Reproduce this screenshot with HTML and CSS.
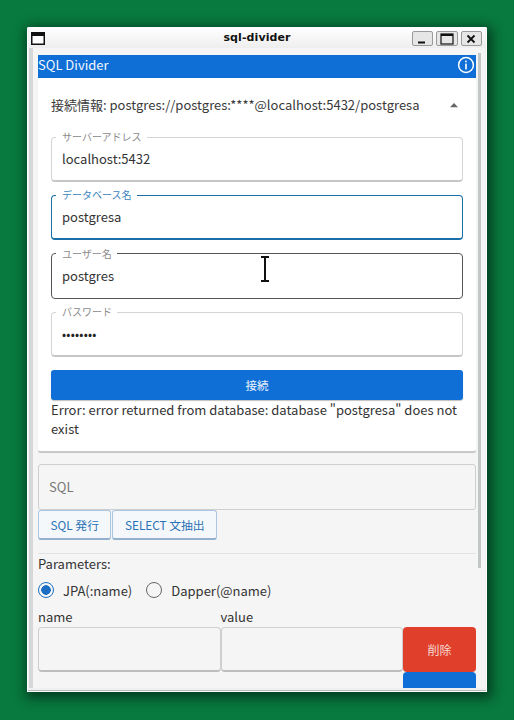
FILE: index.html
```html
<!DOCTYPE html>
<html lang="ja">
<head>
<meta charset="utf-8">
<title>sql-divider</title>
<link rel="stylesheet" href="styles.css">
</head>
<body>
<div class="window">
  <div class="titlebar">
    <svg class="win-menu" width="14" height="13" viewBox="0 0 14 13"><rect x="0.75" y="0.75" width="12.5" height="11.5" fill="#fff" stroke="#111" stroke-width="1.5"/><rect x="1" y="1" width="12" height="3" fill="#111"/></svg>
    <div class="win-title">sql-divider</div>
    <div class="win-controls">
      <div class="win-btn"><svg width="10" height="10" viewBox="0 0 10 10"><rect x="1" y="7.5" width="7" height="2" fill="#111"/></svg></div>
      <div class="win-btn"><svg width="14" height="12" viewBox="0 0 14 12"><rect x="1" y="1" width="12" height="10" fill="none" stroke="#111" stroke-width="1.2"/><rect x="1" y="1" width="12" height="2" fill="#111"/></svg></div>
      <div class="win-btn"><svg width="10" height="10" viewBox="0 0 10 10"><path d="M1.5 1.5L8.5 8.5M8.5 1.5L1.5 8.5" stroke="#111" stroke-width="1.8"/></svg></div>
    </div>
  </div>
  <div class="viewport">
    <div class="scrollbar"></div>
    <main class="page">
      <header class="appbar">
        <span>SQL Divider</span>
        <svg class="info" width="18" height="18" viewBox="0 0 18 18"><circle cx="9" cy="9" r="7.4" fill="none" stroke="#fff" stroke-width="1.5"/><rect x="8.2" y="7.6" width="1.6" height="5.8" fill="#fff"/><rect x="8.2" y="4.6" width="1.6" height="1.7" fill="#fff"/></svg>
      </header>
      <section class="card">
        <div class="acc-head">
          <span>接続情報: postgres://postgres:****@localhost:5432/postgresa</span>
          <svg class="caret" width="10" height="6" viewBox="0 0 10 6"><path d="M1 5.2L5 1L9 5.2Z" fill="#666"/></svg>
        </div>
        <div class="acc-body">
          <fieldset class="field">
            <legend>サーバーアドレス</legend>
            <div class="value">localhost:5432</div>
          </fieldset>
          <fieldset class="field focus">
            <legend>データベース名</legend>
            <div class="value">postgresa</div>
          </fieldset>
          <fieldset class="field hover">
            <legend>ユーザー名</legend>
            <div class="value">postgres</div>
          </fieldset>
          <fieldset class="field">
            <legend>パスワード</legend>
            <div class="value dots">••••••••</div>
          </fieldset>
          <button class="primary">接続</button>
          <p class="error">Error: error returned from database: database "postgresa" does not exist</p>
        </div>
      </section>
      <div class="sql-box">SQL</div>
      <div class="actions">
        <button class="outline">SQL 発行</button>
        <button class="outline">SELECT 文抽出</button>
      </div>
      <hr class="rule">
      <div class="param-label">Parameters:</div>
      <div class="radios">
        <label class="radio"><span class="dot on"></span>JPA(:name)</label>
        <label class="radio"><span class="dot"></span>Dapper(@name)</label>
      </div>
      <div class="param-grid">
        <div class="col-name">name</div>
        <div class="col-name">value</div>
        <div></div>
        <div class="box"></div>
        <div class="box"></div>
        <button class="danger">削除</button>
      </div>
      <div class="add-row"><button class="add"></button></div>
    </main>
  </div>
  <svg class="cursor" width="16" height="30" viewBox="0 0 16 30"><path d="M3 2h10M3 28h10M8 2v26" stroke="#fff" stroke-width="4.5" fill="none"/><path d="M4 3h8M4 27h8M8 3v24" stroke="#111" stroke-width="2" fill="none"/></svg>
</div>
</body>
</html>
```
FILE: styles.css
```css
* { box-sizing: border-box; }
html, body { margin: 0; height: 100%; }
body {
  width: 514px;
  height: 720px;
  overflow: hidden;
  background: #08793f;
  font-family: "Noto Sans CJK JP", "Noto Sans", sans-serif;
  color: #333;
  position: relative;
}
.window {
  position: absolute;
  left: 27px;
  top: 27px;
  width: 460px;
  height: 665px;
  background: #f0f0f0;
  border-radius: 2px 2px 0 0;
  box-shadow: 2px 3px 12px 3px rgba(0, 20, 10, 0.6), inset 0 0 0 1px #fff, inset -1px -2px 0 #b8bcbc;
  display: flex;
  flex-direction: column;
  padding: 0 2px 4px 2px;
}
.titlebar {
  height: 21px;
  flex: none;
  display: flex;
  align-items: center;
  padding: 0 3px 0 2px;
  background: linear-gradient(#fff, #eee);
  position: relative;
}
.win-menu { flex: none; margin-top: 2px; }
.win-title {
  position: absolute;
  left: 0;
  right: 0;
  top: 4px;
  text-align: center;
  font: bold 11px "DejaVu Sans", sans-serif;
  color: #111;
  letter-spacing: 0.1px;
}
.win-controls { margin-left: auto; display: flex; gap: 3px; margin-top: 2px; position: relative; }
.win-btn {
  width: 21.5px;
  height: 15px;
  background: #e6e6e6;
  border: 1px solid #9a9a9a;
  border-radius: 2px;
  display: flex;
  align-items: center;
  justify-content: center;
}
.viewport {
  flex: 1;
  min-height: 0;
  position: relative;
  overflow: hidden;
  background: #f5f5f5;
  border-left: 4px solid #d6d8d8;
  padding: 7px 9px 0 5px;
}
.scrollbar {
  position: absolute;
  right: 4px;
  top: 5px;
  width: 3px;
  height: 515px;
  background: #c3c7c7;
}
.page { display: flex; flex-direction: column; width: 438px; }
.appbar {
  height: 23px;
  background: #0f6fd6;
  color: #f2f7fd;
  font-size: 13px;
  line-height: 20px;
  display: flex;
  align-items: center;
  justify-content: space-between;
  padding-right: 1px;
  flex: none;
}
.appbar span { position: relative; top: -2px; }
.info { flex: none; position: relative; top: -2px; }
.card {
  background: #fff;
  border-bottom: 2px solid #c9c9c9;
  border-radius: 0 0 3px 3px;
  box-shadow: 0 0 1px rgba(0,0,0,.15);
  padding: 0 13px;
  height: 375px;
  flex: none;
}
.acc-head {
  height: 54px;
  display: flex;
  align-items: center;
  justify-content: space-between;
  font-size: 13px;
  color: #3a3a3a;
  padding-right: 4px;
  padding-bottom: 1px;
}
.caret { flex: none; }
.acc-body { display: flex; flex-direction: column; padding-top: 5px; }
.field {
  margin: -5px 0 13.4px 0;
  padding: 0 10px;
  height: 50px;
  border: 1px solid #d4d4d4;
  border-bottom: 2px solid #c6c6c6;
  border-radius: 4px;
  min-width: 0;
  position: relative;
}
.field legend {
  font-size: 10px;
  line-height: 10px;
  color: #8a8a8a;
  padding: 0 5px 0 6px;
  margin-left: -6px;
}
.value { font-size: 13px; line-height: 20px; color: #333; padding-top: 7px; }
.dots { font-size: 12px; color: #222; letter-spacing: 0.25px; }
.field.focus { border: 1.5px solid #1a6fa8; border-bottom-width: 2.5px; }
.field.focus legend { color: #3a83bd; }
.field.hover { border: 1px solid #555; border-bottom-width: 1.5px; }
.primary {
  height: 30px;
  border: 0;
  background: #0f6fd6;
  color: #eaf2fb;
  border-radius: 3px;
  font: 11.5px "Noto Sans CJK JP", sans-serif;
  box-shadow: 0 1px 1px rgba(0,0,0,.25);
  flex: none;
  margin-top: -1px;
  padding: 0;
}
.error { margin: 0; font-size: 13px; line-height: 19.5px; color: #333; }
.sql-box {
  height: 46px;
  margin-top: 11px;
  border: 1px solid #cfcfcf;
  border-radius: 3px;
  background: #f5f5f5;
  font-size: 13px;
  color: #777;
  padding: 0 10px;
  line-height: 44px;
  flex: none;
}
.actions { display: flex; gap: 1px; flex: none; }
.outline {
  height: 30px;
  background: #f5f8fb;
  border: 1px solid #a9c6e3;
  border-bottom: 2px solid #93b0cc;
  border-radius: 3px;
  color: #2a72b5;
  font: 11.8px "Noto Sans CJK JP", sans-serif;
  padding: 0 11.5px;
}
.rule { width: 100%; margin: 13px 0 0; border: 0; border-top: 1px solid #e2e2e2; flex: none; }
.param-label { font-size: 13px; line-height: 20px; color: #333; }
.radios { display: flex; gap: 14px; font-size: 13px; height: 32px; align-items: center; }
.radio { display: flex; align-items: center; gap: 9px; color: #333; }
.dot {
  width: 16px;
  height: 16px;
  border: 1.5px solid #666;
  border-radius: 50%;
  flex: none;
  display: block;
}
.dot.on { border-color: #1a6fc4; background: radial-gradient(circle, #1a6fc4 0 4.5px, transparent 5px); }
.param-grid {
  display: grid;
  grid-template-columns: 182.5px 182.5px 73px;
  grid-template-rows: 20px 45px;
  margin-top: 1px;
  font-size: 13px;
}
.col-name { line-height: 20px; color: #333; }
.box {
  border: 1px solid #cfcfcf;
  border-bottom: 2px solid #bdbdbd;
  border-radius: 4px;
  background: #f5f5f5;
}
.danger {
  background: #e0402b;
  color: #f6d9d4;
  border: 0;
  border-radius: 4px;
  font: 12px "Noto Sans CJK JP", sans-serif;
  padding: 0;
}
.add-row { display: flex; justify-content: flex-end; }
.add {
  width: 73px;
  height: 30px;
  background: #0f6fd6;
  border: 0;
  border-radius: 4px;
  flex: none;
}
.cursor { position: absolute; left: 230px; top: 227px; }
```
